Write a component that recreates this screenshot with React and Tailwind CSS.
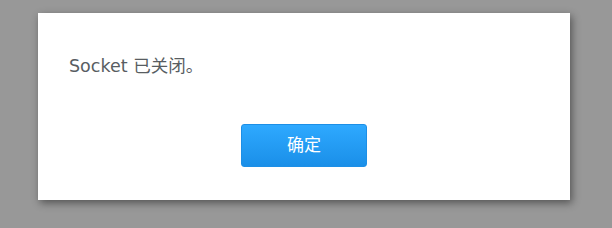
export default function App() {
  return (
    <div className="h-[228px] w-full bg-[#989898] pt-[13px] pl-[38px]" style={{ fontFamily: '"DejaVu Sans", "Noto Sans CJK SC", sans-serif' }}>
      <div className="w-[532px] h-[187px] bg-white shadow-[2px_3px_8px_rgba(0,0,0,0.45)] flex flex-col">
        {/* Message */}
        <div className="pt-[41px] pl-[31px] text-[17.5px] leading-[24px] text-[#585d62]">
          Socket 已关闭。
        </div>

        {/* Actions */}
        <div className="flex justify-center mt-[46px]">
          <button className="w-[126px] h-[43px] rounded-[3px] border border-[#1d8fe6] bg-gradient-to-b from-[#2ea9ff] to-[#1a8fe8] text-white text-[17px]">
            确定
          </button>
        </div>
      </div>
    </div>
  );
}
